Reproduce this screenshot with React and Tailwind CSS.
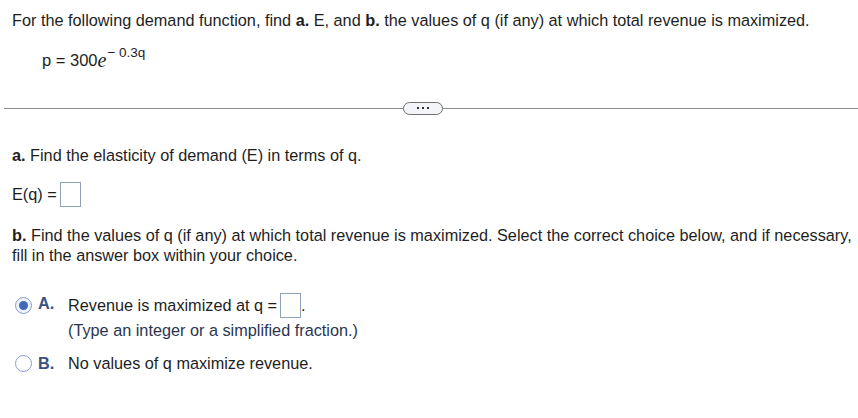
export default function App() {
  return (
    <div className="w-[858px] h-[418px] bg-white text-[#1e1e1e] font-['Liberation_Sans',Arial,sans-serif] text-[16.25px] overflow-hidden">
      <div className="pl-3 pt-[11px] leading-[18px] whitespace-nowrap">
        For the following demand function, find <b>a.</b> E, and <b>b.</b> the values of q (if any) at which total revenue is maximized.
      </div>
      <div className="mt-[21px] pl-[42px] leading-[20px] text-[16.5px] flex items-end">
        <span>p = 300</span>
        <span className="font-['Liberation_Serif',serif] italic text-[20px] leading-[20px]">e</span>
        <span className="text-[13.5px] relative -top-[7px] ml-[1px]">− 0.3q</span>
      </div>
      <div className="mt-[31px] flex items-center h-[14px] pl-[4px]">
        <div className="w-[399px] h-px bg-[#8c8c8c]" />
        <div className="w-[40px] h-[13px] rounded-full border border-[#6f6f6f] bg-[#f4f5f8] flex items-center justify-center gap-[3px]">
          <span className="w-[2px] h-[2px] bg-[#333]" />
          <span className="w-[2px] h-[2px] bg-[#333]" />
          <span className="w-[2px] h-[2px] bg-[#333]" />
        </div>
        <div className="flex-1 h-px bg-[#8c8c8c]" />
      </div>
      <div className="mt-[31px] pl-3 leading-[18px]">
        <b>a.</b> Find the elasticity of demand (E) in terms of q.
      </div>
      <div className="mt-[17px] pl-3 h-[26px] flex items-center">
        <span>E(q) =</span>
        <span className="ml-[3px] w-[21px] h-[25px] border border-[#8fa2ba] bg-white" />
      </div>
      <div className="mt-[18px] pl-3 pr-1 leading-[20px]">
        <b>b.</b> Find the values of q (if any) at which total revenue is maximized. Select the correct choice below, and if necessary, fill in the answer box within your choice.
      </div>
      <div className="mt-[27px] flex items-center h-[26px]">
        <div className="ml-[15px] w-[17px] h-[17px] rounded-full border border-[#8a9dc4] bg-[#eef2fa] flex items-center justify-center">
          <div className="w-[9px] h-[9px] rounded-full bg-[#4468b8]" />
        </div>
        <span className="ml-[6px] font-bold text-[#3a4f86] w-[30px] -mt-[4px]">A.</span>
        <span>Revenue is maximized at q =</span>
        <span className="ml-[3px] w-[21px] h-[25px] border border-[#8fa2ba] bg-[#fffffa]" />
        <span>.</span>
      </div>
      <div className="mt-[2px] pl-[68px] leading-[20px] text-[#2b3550]">
        (Type an integer or a simplified fraction.)
      </div>
      <div className="mt-[13px] flex items-center h-[20px]">
        <div className="ml-[15px] w-[17px] h-[17px] rounded-full border border-[#8a9dc4] bg-white" />
        <span className="ml-[6px] font-bold text-[#3a4f86] w-[30px]">B.</span>
        <span>No values of q maximize revenue.</span>
      </div>
    </div>
  );
}
